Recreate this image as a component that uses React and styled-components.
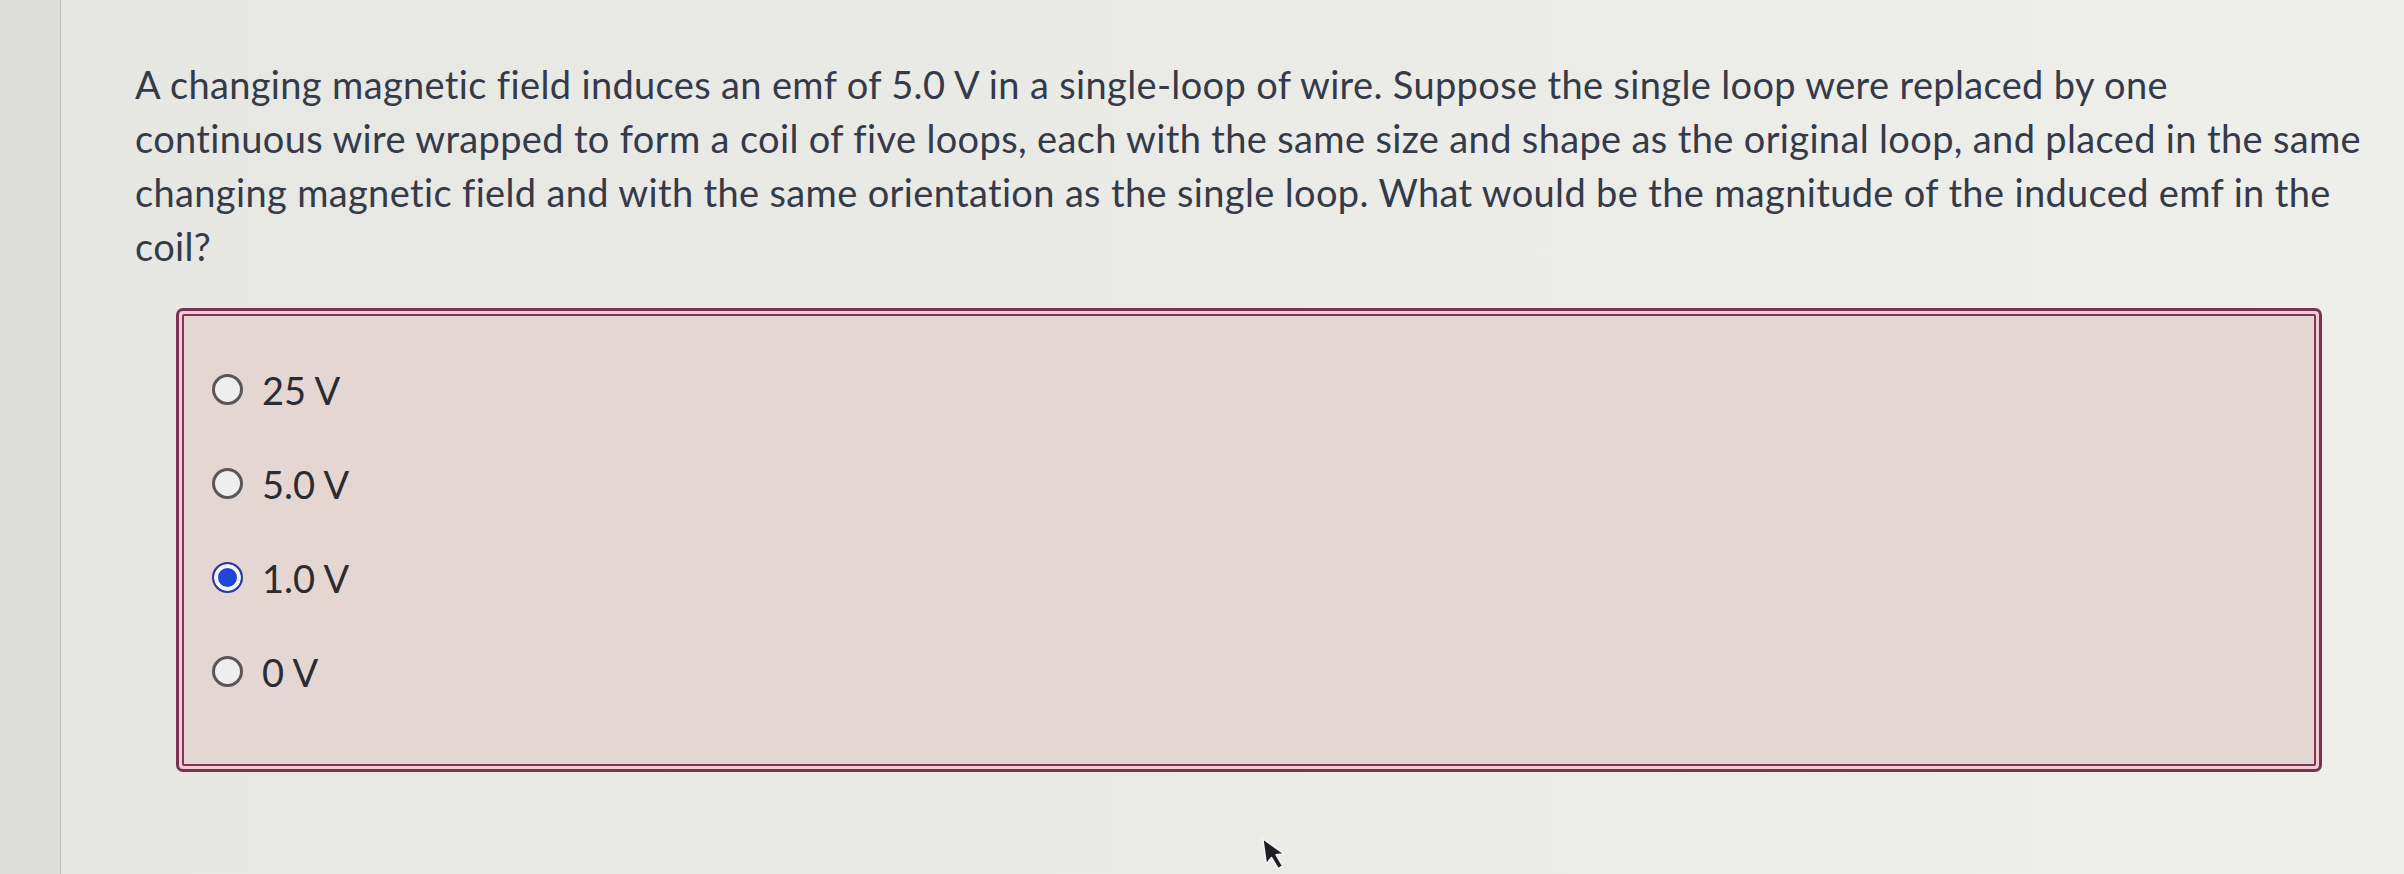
import styled, { createGlobalStyle } from "styled-components";

const GlobalStyle = createGlobalStyle`
  html, body {
    margin: 0;
    padding: 0;
    background: #e9e9e6;
  }
  body {
    font-family: Lato, "Open Sans", sans-serif;
  }
`;

const options = [
  { label: "25 V", checked: false },
  { label: "5.0 V", checked: false },
  { label: "1.0 V", checked: true },
  { label: "0 V", checked: false },
];

export default function App() {
  return (
    <>
      <GlobalStyle />
      <Page>
        <SideStrip />
        <Main>
          <Question>
            A changing magnetic field induces an emf of 5.0 V in a single-loop
            of wire. Suppose the single loop were replaced by one
            <br />
            continuous wire wrapped to form a coil of five loops, each with the
            same size and shape as the original loop, and placed in the same
            changing magnetic field and with the same orientation as the single
            loop. What would be the magnitude of the induced emf in the coil?
          </Question>
          <AnswerFrame>
            <AnswerPanel>
              {options.map((opt) => (
                <OptionRow key={opt.label}>
                  <Radio $checked={opt.checked} />
                  <OptionLabel>{opt.label}</OptionLabel>
                </OptionRow>
              ))}
            </AnswerPanel>
          </AnswerFrame>
        </Main>
        <Cursor width="24" height="38" viewBox="0 0 24 38">
          <path
            d="M2 2 L2 28 L8 22 L13 34 L18 32 L13 20 L21 20 Z"
            fill="#1e1f22"
            stroke="#f4f4f4"
            strokeWidth="1.6"
            strokeLinejoin="round"
          />
        </Cursor>
      </Page>
    </>
  );
}

const Page = styled.div`
  position: relative;
  display: flex;
  width: 2404px;
  height: 874px;
  overflow: hidden;
  background: linear-gradient(90deg, #e6e6e3 0%, #ebebe8 60%, #eeeeeb 100%);
`;

const SideStrip = styled.div`
  width: 60px;
  flex-shrink: 0;
  background: #dddddb;
  border-right: 1px solid #bdbdbc;
`;

const Main = styled.div`
  flex: 1;
  padding: 57px 20px 0 74px;
`;

const Question = styled.p`
  margin: 0;
  width: 2240px;
  font-size: 38px;
  letter-spacing: 0.35px;
  line-height: 54px;
  color: #353a48;
`;

const AnswerFrame = styled.div`
  margin: 35px 0 0 41px;
  width: 2134px;
  border: 3px solid #7b3151;
  border-radius: 7px;
  padding: 3px;
  background: #f2cbd2;
`;

const AnswerPanel = styled.div`
  border: 2px solid #803658;
  border-radius: 2px;
  background: #e3d6d3;
  padding: 26px 28px 46px;
  display: flex;
  flex-direction: column;
`;

const OptionRow = styled.div`
  height: 94px;
  display: flex;
  align-items: center;
  gap: 19px;
`;

const Radio = styled.span`
  box-sizing: border-box;
  width: 31px;
  height: 31px;
  border-radius: 50%;
  flex-shrink: 0;
  border: ${(p) => (p.$checked ? "2px solid #2c3a9a" : "3px solid #5a5658")};
  background: ${(p) => (p.$checked ? "#1f46d6" : "#efeeee")};
  box-shadow: ${(p) => (p.$checked ? "inset 0 0 0 4px #f4f4fa" : "none")};
`;

const OptionLabel = styled.span`
  font-size: 38px;
  line-height: 1;
  color: #2b2b31;
  padding-top: 2px;
`;

const Cursor = styled.svg`
  position: absolute;
  left: 1263px;
  top: 835px;
  transform: rotate(-8deg);
`;
